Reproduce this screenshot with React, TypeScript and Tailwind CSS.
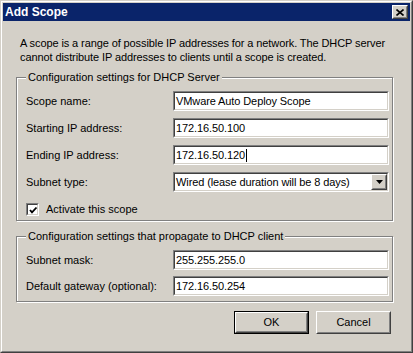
import React from 'react';

// Classic Windows "Add Scope" DHCP dialog

const Sunken: React.FC<{ children?: React.ReactNode; className?: string }> = ({ children, className = '' }) => (
    <div className={`border border-t-[#808080] border-l-[#808080] border-r-white border-b-white ${className}`}>
        <div className="h-full border border-t-[#404040] border-l-[#404040] border-r-[#d4d0c8] border-b-[#d4d0c8] bg-white">
            {children}
        </div>
    </div>
);

const TextField: React.FC<{ value: string; caret?: boolean }> = ({ value, caret }) => (
    <Sunken className="w-[216px] h-[20px]">
        <div className="h-full flex items-center pl-[1px] text-[11px] leading-none tracking-[-0.1px] text-black">
            <span>{value}</span>
            {caret && <span className="ml-[1px] h-[13px] border-l border-black" />}
        </div>
    </Sunken>
);

const Row: React.FC<{ label: string; children: React.ReactNode }> = ({ label, children }) => (
    <div className="flex items-center justify-between h-[20px]">
        <span className="text-[11px] text-black">{label}</span>
        {children}
    </div>
);

const GroupBox: React.FC<{ title: string; children: React.ReactNode; className?: string }> = ({ title, children, className = '' }) => (
    <div className={`relative border border-[#808080] shadow-[inset_1px_1px_0_#ffffff,1px_1px_0_#ffffff] pl-[9px] pr-[3px] ${className}`}>
        <span className="absolute left-[9px] top-[-8px] px-[2px] bg-[#d4d0c8] text-[11px] leading-[14px] text-black">
            {title}
        </span>
        {children}
    </div>
);

const Raised: React.FC<{ children?: React.ReactNode; className?: string }> = ({ children, className = '' }) => (
    <div className={`border border-t-white border-l-white border-r-[#404040] border-b-[#404040] ${className}`}>
        <div className="h-full border border-t-[#d4d0c8] border-l-[#d4d0c8] border-r-[#808080] border-b-[#808080] bg-[#d4d0c8] flex items-center justify-center">
            {children}
        </div>
    </div>
);

export default function App() {
    return (
        <div className="w-[413px] h-[353px] font-['Liberation_Sans',Arial,sans-serif] bg-[#d4d0c8]">
            <div className="w-full h-full border border-t-[#d4d0c8] border-l-[#d4d0c8] border-r-[#404040] border-b-[#404040]">
                <div className="w-full h-full border border-t-white border-l-white border-r-[#808080] border-b-[#808080] p-[1px] flex flex-col">
                    {/* Title bar */}
                    <div className="h-[18px] bg-[#0a246a] flex items-center justify-between pl-[2px] pr-[2px]">
                        <span className="text-white font-bold text-[12px] leading-none">Add Scope</span>
                        <Raised className="w-[16px] h-[14px]">
                            <svg width="8" height="7" viewBox="0 0 8 7">
                                <path d="M0.5 0.5 L7.5 6.5 M7.5 0.5 L0.5 6.5" stroke="#000" strokeWidth="1.6" />
                            </svg>
                        </Raised>
                    </div>

                    {/* Body */}
                    <div className="pl-[13px] pr-[17px]">
                        <p className="mt-[15px] ml-[4px] text-[11px] leading-[14px] tracking-[-0.1px] text-black">
                            A scope is a range of possible IP addresses for a network. The DHCP server<br />
                            cannot distribute IP addresses to clients until a scope is created.
                        </p>

                        <GroupBox title="Configuration settings for DHCP Server" className="mt-[13px] pt-[13px] pb-[4px]">
                            <div className="flex flex-col gap-[7px]">
                                <Row label="Scope name:">
                                    <TextField value="VMware Auto Deploy Scope" />
                                </Row>
                                <Row label="Starting IP address:">
                                    <TextField value="172.16.50.100" />
                                </Row>
                                <Row label="Ending IP address:">
                                    <TextField value="172.16.50.120" caret />
                                </Row>
                                <Row label="Subnet type:">
                                    <Sunken className="w-[216px] h-[20px]">
                                        <div className="h-full flex items-center justify-between">
                                            <span className="pl-[1px] text-[11px] leading-none tracking-[-0.1px] text-black">Wired (lease duration will be 8 days)</span>
                                            <Raised className="w-[16px] h-[16px]">
                                                <svg width="7" height="4" viewBox="0 0 7 4">
                                                    <path d="M0 0 H7 L3.5 4 Z" fill="#000" />
                                                </svg>
                                            </Raised>
                                        </div>
                                    </Sunken>
                                </Row>
                            </div>
                            <div className="mt-[11px] flex items-center gap-[7px]">
                                <Sunken className="w-[13px] h-[13px]">
                                    <svg width="9" height="9" viewBox="0 0 9 9" className="block ml-[1px] mt-[1px]">
                                        <path d="M1 4 L3 6.4 L7.5 1.5" stroke="#000" strokeWidth="1.8" fill="none" />
                                    </svg>
                                </Sunken>
                                <span className="text-[11px] leading-[13px] text-black">Activate this scope</span>
                            </div>
                        </GroupBox>

                        <GroupBox title="Configuration settings that propagate to DHCP client" className="mt-[15px] pt-[13px] pb-[5px]">
                            <div className="flex flex-col gap-[6px]">
                                <Row label="Subnet mask:">
                                    <TextField value="255.255.255.0" />
                                </Row>
                                <Row label="Default gateway (optional):">
                                    <TextField value="172.16.50.254" />
                                </Row>
                            </div>
                        </GroupBox>

                        {/* Buttons */}
                        <div className="mt-[9px] flex justify-end gap-[7px] pr-[2px]">
                            <div className="border border-black">
                                <Raised className="w-[73px] h-[21px]">
                                    <span className="text-[11px] leading-none text-black">OK</span>
                                </Raised>
                            </div>
                            <Raised className="w-[75px] h-[23px]">
                                <span className="text-[11px] leading-none text-black">Cancel</span>
                            </Raised>
                        </div>
                    </div>
                </div>
            </div>
        </div>
    );
}
